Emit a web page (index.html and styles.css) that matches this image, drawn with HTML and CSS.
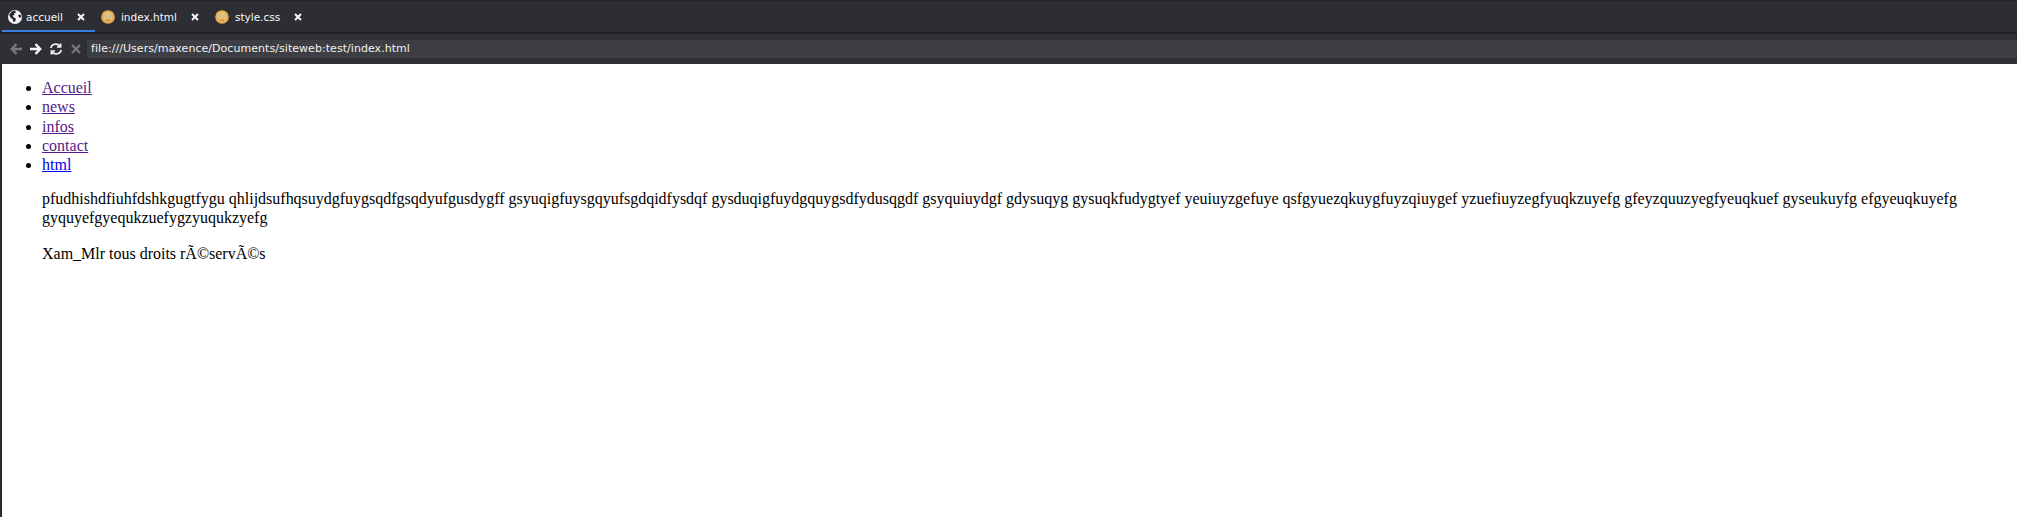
FILE: index.html
```html
<!DOCTYPE html>
<html lang="fr">
<head>
    <meta charset="UTF-8">
    <title>accueil</title>
    <link rel="stylesheet" href="styles.css">
</head>
<body>
    <!-- Tabs -->
    <div class="tabbar">
        <div class="tab active">
            <svg class="tab-icon globe" viewBox="0 0 14 14"><circle cx="7" cy="7" r="7" fill="#f4f4f4"/><path d="M1.2 4.5L4 1.2 7.5.6 7.8 2.4 6 3.4 6.6 5 4.6 5.6 5.8 7.6 7.8 8.4 7.4 11.2 5.6 12 4.6 9.2 2.4 7.6z" fill="#26272c"/><path d="M10 5.2l2.6-.8.8 2.4-2 1.2z" fill="#26272c"/></svg>
            <span class="tab-title">accueil</span>
            <svg class="tab-close" viewBox="0 0 8 8"><path d="M1 1l6 6M7 1L1 7"/></svg>
        </div>
        <div class="tab">
            <svg class="tab-icon" viewBox="0 0 14 14"><circle cx="7" cy="7" r="6.8" fill="#e9ac4e"/><circle cx="7" cy="6.6" r="4.6" fill="#edc173"/><circle cx="4.8" cy="6" r="1.6" fill="#c2bda6"/><circle cx="9.2" cy="6" r="1.6" fill="#c2bda6"/><path d="M5 10.4q2-1.4 4 0" stroke="#a9763a" fill="none"/></svg>
            <span class="tab-title">index.html</span>
            <svg class="tab-close" viewBox="0 0 8 8"><path d="M1 1l6 6M7 1L1 7"/></svg>
        </div>
        <div class="tab">
            <svg class="tab-icon" viewBox="0 0 14 14"><circle cx="7" cy="7" r="6.8" fill="#e9ac4e"/><circle cx="7" cy="6.6" r="4.6" fill="#edc173"/><circle cx="4.8" cy="6" r="1.6" fill="#c2bda6"/><circle cx="9.2" cy="6" r="1.6" fill="#c2bda6"/><path d="M5 10.4q2-1.4 4 0" stroke="#a9763a" fill="none"/></svg>
            <span class="tab-title">style.css</span>
            <svg class="tab-close" viewBox="0 0 8 8"><path d="M1 1l6 6M7 1L1 7"/></svg>
        </div>
    </div>

    <!-- Toolbar -->
    <div class="toolbar">
        <svg class="nav-icon" viewBox="0 0 12 12"><path d="M6.5 1.2L1.8 6l4.7 4.8M2.5 6H12" class="stroke-off"/></svg>
        <svg class="nav-icon" viewBox="0 0 12 12"><path d="M5.5 1.2L10.2 6l-4.7 4.8M9.5 6H0" class="stroke-on"/></svg>
        <svg class="nav-icon" viewBox="0 0 12 12"><path d="M.8 5A5 4.6 0 0 1 9.8 3M11.2 7A5 4.6 0 0 1 2.2 9M10.6.4v3.6H7M1.4 11.6V8H5" class="stroke-thin"/></svg>
        <svg class="nav-icon stop" viewBox="0 0 10 10"><path d="M1 1l8 8M9 1L1 9" class="stroke-off"/></svg>
        <div class="urlbar">file:///Users/maxence/Documents/siteweb:test/index.html</div>
    </div>

    <!-- Page -->
    <div class="page">
        <ul class="menu">
            <li><a class="visited" href="#">Accueil</a></li>
            <li><a class="visited" href="#">news</a></li>
            <li><a class="visited" href="#">infos</a></li>
            <li><a class="visited" href="#">contact</a></li>
            <li><a href="#">html</a></li>
        </ul>
        <p class="text">pfudhishdfiuhfdshkgugtfygu qhlijdsufhqsuydgfuygsqdfgsqdyufgusdygff gsyuqigfuysgqyufsgdqidfysdqf gysduqigfuydgquygsdfydusqgdf gsyquiuydgf gdysuqyg gysuqkfudygtyef yeuiuyzgefuye qsfgyuezqkuygfuyzqiuygef yzuefiuyzegfyuqkzuyefg gfeyzquuzyegfyeuqkuef gyseukuyfg efgyeuqkuyefg gyquyefgyequkzuefygzyuqukzyefg</p>
        <p class="text">Xam_Mlr tous droits rÃ©servÃ©s</p>
    </div>
</body>
</html>
```

FILE: styles.css
```css
* {
    box-sizing: border-box;
}

html, body {
    height: 100%;
}

body {
    margin: 0;
    display: flex;
    flex-direction: column;
    background: #2a2b30;
    overflow: hidden;
}

/* Tabs */
.tabbar {
    height: 34px;
    display: flex;
    padding-left: 2px;
    background: #2d2e33;
    border-top: 2px solid #25262b;
    border-bottom: 2px solid #202125;
    box-shadow: inset 0 1px 0 #35363b;
    font-family: "DejaVu Sans", sans-serif;
    font-size: 10.5px;
    color: #f8f8f8;
}

.tab {
    height: 32px;
    margin-top: -2px;
    display: flex;
    align-items: center;
    padding: 2px 10px 0 6px;
}

.tab.active {
    box-shadow: inset 0 -2px 0 #3b7fdc;
}

.tab-icon {
    width: 14px;
    height: 14px;
    margin-right: 6px;
}

.globe {
    margin-right: 4px;
}

.tab-close {
    width: 8px;
    height: 8px;
    margin-left: 14px;
}

.tab-close path {
    fill: none;
    stroke: #f6f6f6;
    stroke-width: 2;
}

/* Toolbar */
.toolbar {
    height: 30px;
    display: flex;
    align-items: center;
    padding: 0 0 0 10px;
    background: #2f3035;
}

.nav-icon {
    width: 12px;
    height: 12px;
    margin-right: 8px;
}

.nav-icon path {
    fill: none;
    stroke-width: 2.4;
}

.nav-icon.stop {
    width: 10px;
    height: 10px;
    margin-left: 1px;
    margin-right: 6px;
}

.stroke-off {
    stroke: #77787c;
}

.stroke-on {
    stroke: #f6f6f6;
}

.nav-icon .stroke-thin {
    stroke: #f0f0f0;
    stroke-width: 1.7;
}

.urlbar {
    flex: 1;
    height: 18px;
    padding-left: 4px;
    background: #3d3e44;
    font-family: "DejaVu Sans", sans-serif;
    font-size: 11px;
    line-height: 18px;
    letter-spacing: 0.05px;
    color: #f2f2f2;
}

/* Page */
.page {
    flex: 1;
    margin-left: 2px;
    padding-top: 14px;
    background: #ffffff;
    color: #000000;
    font-family: "Liberation Serif", serif;
    font-size: 16px;
    line-height: 19.5px;
}

.menu {
    margin: 0 0 14.5px 0;
    padding-left: 40px;
    line-height: 19.3px;
}

.visited {
    color: #551a8b;
}

.text {
    margin: 0 40px 16px 40px;
    letter-spacing: -0.01px;
}
```
